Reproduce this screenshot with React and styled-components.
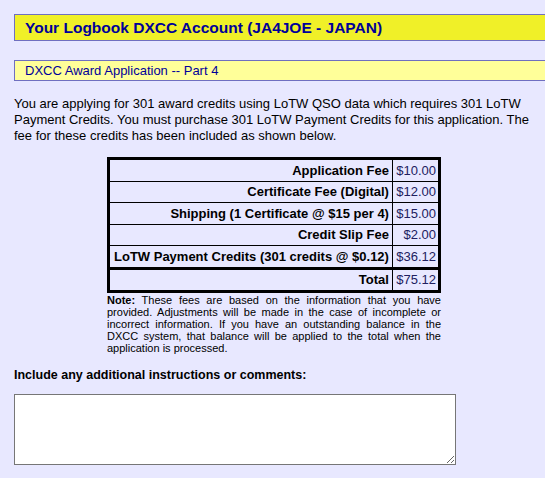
import React from 'react'
import styled, { createGlobalStyle } from 'styled-components'

const fees = [
  { label: 'Application Fee', amount: '$10.00' },
  { label: 'Certificate Fee (Digital)', amount: '$12.00' },
  { label: 'Shipping (1 Certificate @ $15 per 4)', amount: '$15.00' },
  { label: 'Credit Slip Fee', amount: '$2.00' },
  { label: 'LoTW Payment Credits (301 credits @ $0.12)', amount: '$36.12' },
]

function App() {
  return (
    <>
      <Global />
      <Page>
        <Header>Your Logbook DXCC Account (JA4JOE - JAPAN)</Header>
        <SubHeader>DXCC Award Application -- Part 4</SubHeader>
        <Intro>
          You are applying for 301 award credits using LoTW QSO data which requires 301 LoTW
          Payment Credits. You must purchase 301 LoTW Payment Credits for this application. The
          fee for these credits has been included as shown below.
        </Intro>
        <FeeBlock>
          <FeeTable>
            <tbody>
              {fees.map((f, i) => (
                <tr key={f.label}>
                  <Label $last={i === fees.length - 1}>{f.label}</Label>
                  <Amount $last={i === fees.length - 1}>{f.amount}</Amount>
                </tr>
              ))}
              <tr>
                <Label>Total</Label>
                <Amount>$75.12</Amount>
              </tr>
            </tbody>
          </FeeTable>
          <Note>
            <b>Note:</b> These fees are based on the information that you have provided.
            Adjustments will be made in the case of incomplete or incorrect information. If you
            have an outstanding balance in the DXCC system, that balance will be applied to the
            total when the application is processed.
          </Note>
        </FeeBlock>
        <CommentLabel>Include any additional instructions or comments:</CommentLabel>
        <Comments />
      </Page>
    </>
  )
}

export default App

const Global = createGlobalStyle`
  html, body {
    margin: 0;
    padding: 0;
    overflow: hidden;
    background: #e8e8ff;
  }
  body {
    font-family: "Liberation Sans", Arial, sans-serif;
  }
`

const Page = styled.div`
  width: 520px;
  padding: 14px 0 0 14px;
`

/* the title bars run off the right edge of the window */
const Bar = styled.div`
  width: calc(100vw - 14px);
  box-sizing: border-box;
  border: 1px solid #6f6fc0;
  border-right: none;
  color: #000099;
  padding-left: 10px;
  white-space: nowrap;
`

const Header = styled(Bar)`
  height: 27px;
  background: #f0f028;
  font-size: 15.5px;
  font-weight: bold;
  line-height: 25px;
`

const SubHeader = styled(Bar)`
  margin-top: 19px;
  height: 21px;
  background: #ffff99;
  font-size: 13px;
  line-height: 19px;
`

const Intro = styled.p`
  margin: 15px 0 0;
  font-size: 13px;
  line-height: 16px;
  color: #000;
`

const FeeBlock = styled.div`
  width: 334px;
  margin: 13px auto 0;
`

const FeeTable = styled.table`
  width: 334px;
  border-collapse: collapse;
  border: 3px solid #000;
  font-size: 13px;
`

const Label = styled.td`
  text-align: right;
  font-weight: bold;
  color: #000;
  height: 20.5px;
  padding: 0 3px 0 4px;
  border: 1px solid #000;
  border-bottom: ${(p) => (p.$last ? '3px' : '1px')} solid #000;
  white-space: nowrap;
`

const Amount = styled.td`
  text-align: right;
  color: #202060;
  width: 42px;
  height: 20.5px;
  padding: 0 2px;
  border: 1px solid #000;
  border-bottom: ${(p) => (p.$last ? '3px' : '1px')} solid #000;
  white-space: nowrap;
`

const Note = styled.div`
  margin-top: 1px;
  font-size: 11px;
  line-height: 12px;
  text-align: justify;
  color: #000;
`

const CommentLabel = styled.div`
  margin-top: 14px;
  font-size: 12.5px;
  font-weight: bold;
  color: #000;
`

const Comments = styled.textarea`
  display: block;
  margin-top: 12px;
  width: 442px;
  height: 71px;
  box-sizing: border-box;
  border: 1px solid #767676;
  background: #fff;
`
